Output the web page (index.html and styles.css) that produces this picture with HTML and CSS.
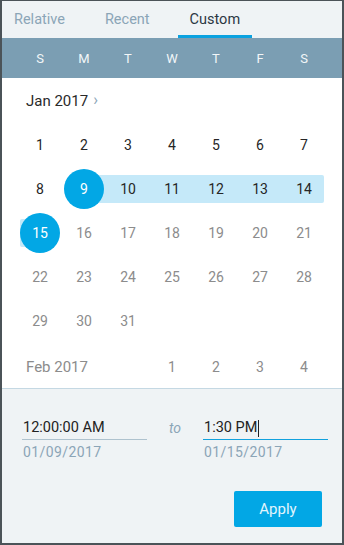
FILE: index.html
```html
<!DOCTYPE html>
<html>
<head>
<meta charset="utf-8">
<link rel="stylesheet" href="styles.css">
</head>
<body>
<div class="picker">
  <div class="tabs">
    <div class="tab">Relative</div>
    <div class="tab">Recent</div>
    <div class="tab active">Custom</div>
  </div>
  <div class="weekdays">
    <span>S</span><span>M</span><span>T</span><span>W</span><span>T</span><span>F</span><span>S</span>
  </div>
  <div class="calendar">
    <div class="month">Jan 2017 <span class="chev">›</span></div>
    <div class="grid">
      <div class="day">1</div><div class="day">2</div><div class="day">3</div><div class="day">4</div><div class="day">5</div><div class="day">6</div><div class="day">7</div>
      <div class="day">8</div>
      <div class="day sel range-start"><span class="dot">9</span></div>
      <div class="day range"><span>10</span></div>
      <div class="day range"><span>11</span></div>
      <div class="day range"><span>12</span></div>
      <div class="day range"><span>13</span></div>
      <div class="day range row-end"><span>14</span></div>
      <div class="day sel range-end row-start"><span class="dot">15</span></div>
      <div class="day muted">16</div><div class="day muted">17</div><div class="day muted">18</div><div class="day muted">19</div><div class="day muted">20</div><div class="day muted">21</div>
      <div class="day muted">22</div><div class="day muted">23</div><div class="day muted">24</div><div class="day muted">25</div><div class="day muted">26</div><div class="day muted">27</div><div class="day muted">28</div>
      <div class="day muted">29</div><div class="day muted">30</div><div class="day muted">31</div>
    </div>
    <div class="grid next">
      <div class="month-inline">Feb 2017</div>
      <div class="day muted">1</div><div class="day muted">2</div><div class="day muted">3</div><div class="day muted">4</div>
    </div>
  </div>
  <div class="footer">
    <div class="times">
      <div class="field">
        <div class="input">12:00:00 AM</div>
        <div class="date">01/09/2017</div>
      </div>
      <div class="to">to</div>
      <div class="field">
        <div class="input focus">1:30 PM<span class="caret"></span></div>
        <div class="date">01/15/2017</div>
      </div>
    </div>
    <div class="actions">
      <button class="apply">Apply</button>
    </div>
  </div>
</div>
</body>
</html>
```
FILE: styles.css
```css
* { box-sizing: border-box; }
html, body { margin: 0; padding: 0; }
body {
  font-family: Roboto, "Liberation Sans", sans-serif;
  background: #ffffff;
}
.picker {
  width: 344px;
  height: 545px;
  border: 2px solid #4b5358;
  border-top-width: 1px;
  background: #eff3f5;
  display: flex;
  flex-direction: column;
}
.tabs {
  display: flex;
  height: 37px;
  gap: 16px;
  background: #eff3f5;
}
.tab {
  padding: 4px 12px 0;
  font-size: 14.5px;
  line-height: 30px;
  color: #8ba5b7;
  border-bottom: 3px solid transparent;
}
.tab.active {
  color: #2b3843;
  border-bottom-color: #0aa2e0;
}
.weekdays {
  height: 40px;
  background: #7b9eb3;
  display: grid;
  grid-template-columns: repeat(7, 44px);
  padding: 0 16px;
  align-items: center;
  font-size: 13px;
  color: #f2f6f8;
}
.weekdays span { text-align: center; }
.calendar {
  background: #ffffff;
  padding: 0 16px;
  border-bottom: 1px solid #c4d8e3;
}
.month {
  height: 45px;
  display: flex;
  align-items: center;
  padding-left: 8px;
  font-size: 15px;
  color: #2a2a2a;
}
.chev {
  color: #8ba5b7;
  font-size: 16px;
  margin-left: 5px;
  margin-top: -2px;
}
.grid {
  display: grid;
  grid-template-columns: repeat(7, 44px);
  grid-auto-rows: 44px;
}
.day {
  position: relative;
  display: flex;
  align-items: center;
  justify-content: center;
  font-size: 14px;
  color: #262626;
}
.day > span { position: relative; z-index: 1; }
.day.muted { color: #8c8c8c; }
.day.range::before,
.day.range-start::before,
.day.range-end::before {
  content: "";
  position: absolute;
  top: 8px;
  height: 28px;
  background: #c5e9f9;
  left: 0;
  right: 0;
}
.day.range-start::before { left: 50%; }
.day.range-end::before { right: 50%; }
.day.row-end::before { right: 2px; border-radius: 0 2px 2px 0; }
.day.row-start::before { left: 2px; border-radius: 2px 0 0 2px; }
.dot {
  width: 40px;
  height: 40px;
  border-radius: 50%;
  background: #02a7e5;
  color: #ffffff;
  display: flex;
  align-items: center;
  justify-content: center;
}
.next {
  grid-auto-rows: 43px;
  padding-top: 2px;
}
.month-inline {
  grid-column: 1 / span 3;
  display: flex;
  align-items: center;
  padding-left: 8px;
  font-size: 15px;
  color: #8c8c8c;
}
.next .day:first-of-type { grid-column: 4; }
.footer {
  flex: 1;
  background: #eff3f5;
  padding: 28px 20px 0;
}
.times {
  display: grid;
  grid-template-columns: 125px 56px 125px;
}
.input {
  font-size: 14.5px;
  line-height: 20px;
  color: #222;
  padding: 1px 0 1px 1px;
  border-bottom: 1px solid #aec2ce;
  display: flex;
  align-items: center;
}
.input.focus { border-bottom-color: #11a1dd; }
.caret {
  display: inline-block;
  width: 1px;
  height: 17px;
  background: #222;
  margin-left: 1px;
}
.date {
  margin-top: 4px;
  line-height: 16px;
  font-size: 14px;
  letter-spacing: 0.4px;
  color: #8ba5b7;
  padding-left: 1px;
}
.to {
  text-align: center;
  font-style: italic;
  font-size: 14px;
  line-height: 22px;
  color: #8ba5b7;
}
.actions {
  display: flex;
  justify-content: flex-end;
  margin-top: 31px;
}
.apply {
  width: 88px;
  height: 36px;
  border: none;
  border-radius: 2px;
  background: #02a7e5;
  color: #e3f5fd;
  font-family: Roboto, "Liberation Sans", sans-serif;
  font-size: 15px;
  padding: 0;
}
```
